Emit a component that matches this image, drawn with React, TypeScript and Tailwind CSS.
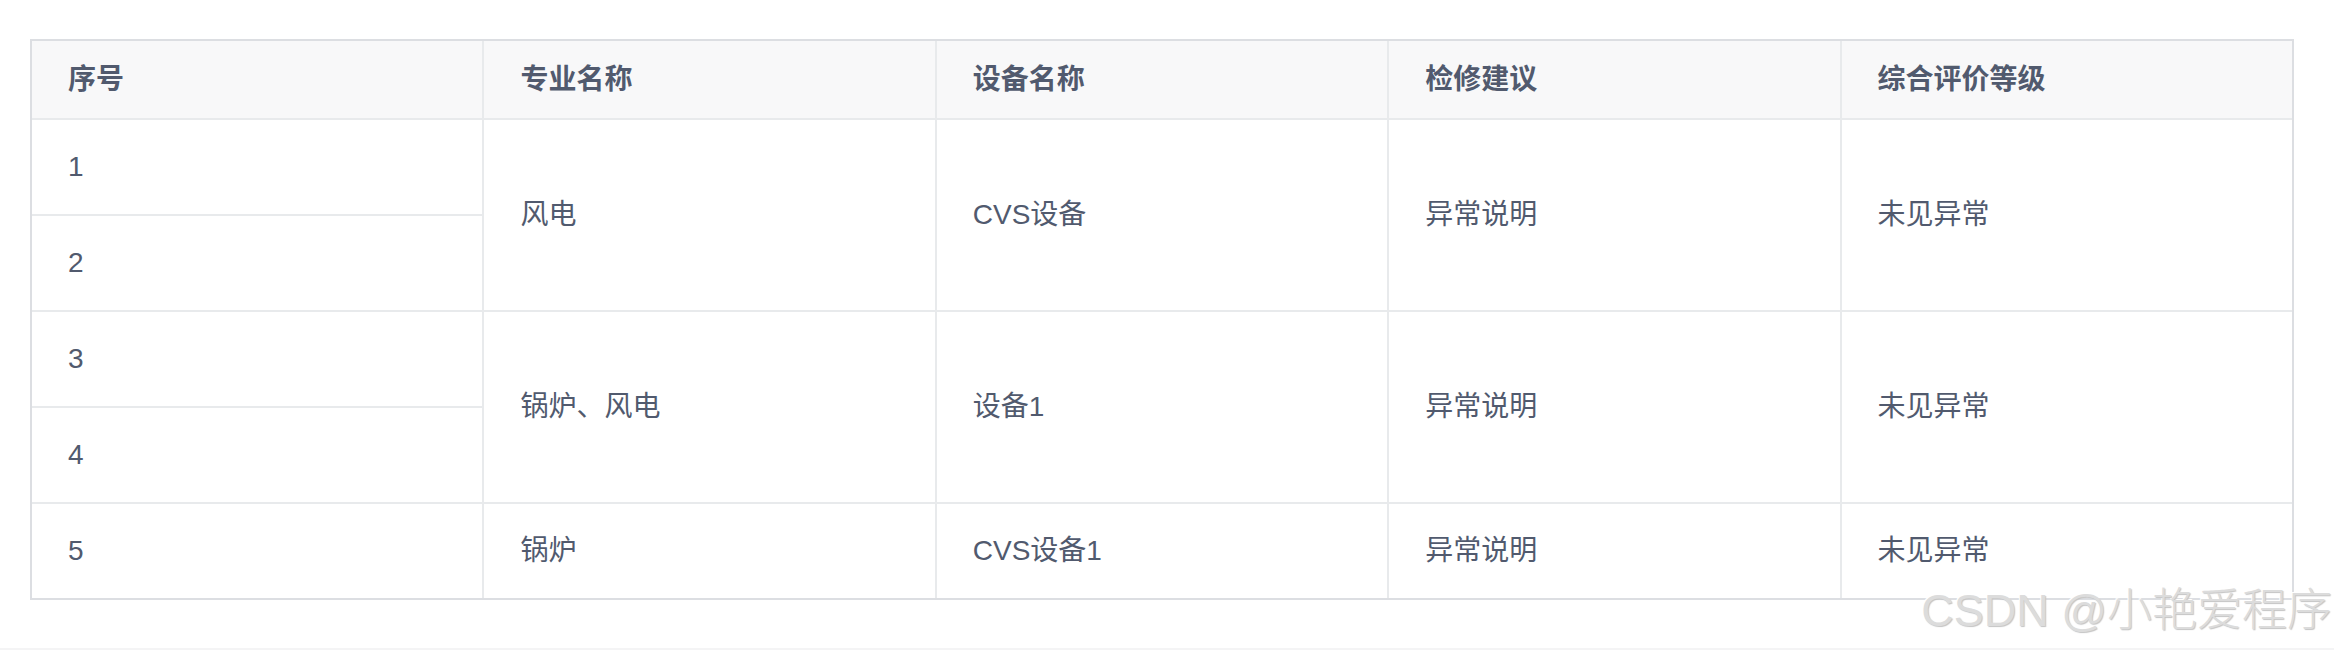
import React from 'react';

const font = { fontFamily: '"Liberation Sans", "Noto Sans CJK SC", sans-serif' };

const headers = ['序号', '专业名称', '设备名称', '检修建议', '综合评价等级'];

const groups = [
  { rows: ['1', '2'], major: '风电', device: 'CVS设备', advice: '异常说明', level: '未见异常' },
  { rows: ['3', '4'], major: '锅炉、风电', device: '设备1', advice: '异常说明', level: '未见异常' },
  { rows: ['5'], major: '锅炉', device: 'CVS设备1', advice: '异常说明', level: '未见异常' }
];

function Cell({ children, span }: { children: React.ReactNode; span?: number }) {
  return (
    <div className={`bg-white flex items-center pl-[36px] pr-4 ${span === 2 ? 'row-span-2' : ''}`}>
      {children}
    </div>
  );
}

export default function App() {
  return (
    <div className="w-[2334px] h-[650px] bg-white flex flex-col relative overflow-hidden" style={font}>
      <div className="flex-1 pt-[39px] pl-[30px]">
        <div className="w-[2264px] border-2 border-[#dcdee2] bg-[#e8eaec]">
          <div className="grid grid-cols-5 grid-rows-[77px_repeat(5,94px)] gap-[2px] text-[28px] text-[#515a6e]">
            {headers.map(h => (
              <div key={h} className="bg-[#f8f8f9] flex items-center pl-[36px] font-semibold">
                {h}
              </div>
            ))}
            {groups.map(g => (
              <React.Fragment key={g.rows[0]}>
                <Cell>{g.rows[0]}</Cell>
                <Cell span={g.rows.length}>{g.major}</Cell>
                <Cell span={g.rows.length}>{g.device}</Cell>
                <Cell span={g.rows.length}>{g.advice}</Cell>
                <Cell span={g.rows.length}>{g.level}</Cell>
                {g.rows.slice(1).map(r => (
                  <Cell key={r}>{r}</Cell>
                ))}
              </React.Fragment>
            ))}
          </div>
        </div>
      </div>
      <div className="h-[2px] bg-[#f4f4f5]" />
      {/* watermark */}
      <div className="absolute right-[2px] top-[588px] text-[45px] leading-none text-[#dcdcdc] font-light whitespace-nowrap [text-shadow:1px_1px_1px_#c4c4c4,-1px_-1px_0_#ffffff]">
        CSDN @小艳爱程序
      </div>
    </div>
  );
}
